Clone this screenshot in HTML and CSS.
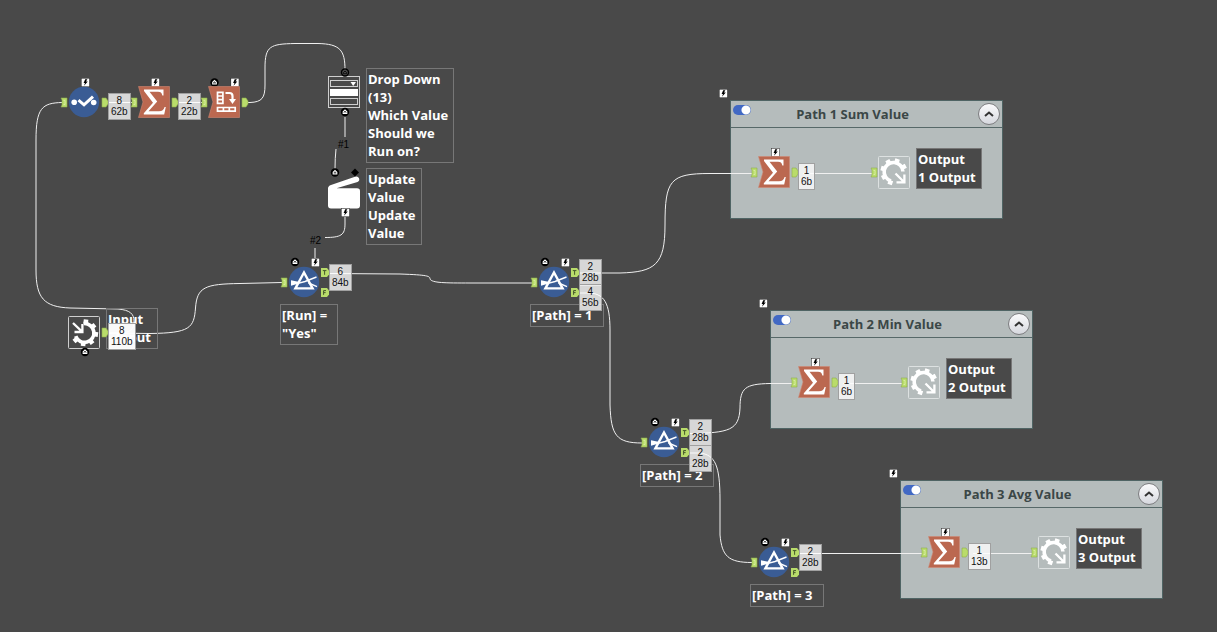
FILE: index.html
```html
<!DOCTYPE html>
<html lang="en">
<head>
<meta charset="utf-8">
<title>Workflow canvas</title>
<link rel="stylesheet" href="styles.css">
</head>
<body>
<svg class="defs" aria-hidden="true">
  <defs>
    <g id="port-in"><path d="M0 0H6V9H0L1 7V2Z" fill="#b9dc6b" stroke="#8fae4c" stroke-width=".6"/><path d="M2.5 2.5H4V6.5H2.5" fill="none" stroke="#dcf0a8" stroke-width=".8"/></g>
    <g id="port-out"><path d="M0 0H4L6 3V6L4 9H0Z" fill="#b9dc6b" stroke="#8fae4c" stroke-width=".6"/></g>
    <g id="port-t"><path d="M0 0H6L8 2.5V6.5L6 9H0Z" fill="#b9dc6b"/><path d="M1.8 2.6H5.4M3.6 2.6V6.8" stroke="#46582a" fill="none"/></g>
    <g id="port-f"><path d="M0 0H6L8 2.5V6.5L6 9H0Z" fill="#b9dc6b"/><path d="M5 2.6H2.6V6.8M2.6 4.6H4.6" stroke="#46582a" fill="none"/></g>
    <g id="bolt"><rect width="8.600" height="9" fill="#333"/><rect x=".6" y=".6" width="7.600" height="7.800" fill="#fff"/><path d="M4.200 1.300H6.400L5 3.600H6.800L3 7.700L4 5H2.600Z" fill="#000"/></g>
    <g id="action"><circle r="4.2" fill="#000"/><path d="M-1.8 1.5V-.2L0-1.9L1.8-.2V1.5Z" fill="none" stroke="#fff" stroke-width="1.1"/><path d="M-.9 .5H.9" stroke="#fff" stroke-width=".8"/></g>
    <g id="ribbon"><path d="M14.5 14.5H45.5V45.5H14.5L19 30Z" fill="#bb6850" stroke="#d08672" stroke-width=".6"/></g>

    <symbol id="tool-select" viewBox="0 0 60 60">
      <use href="#port-in" x="7" y="26"/><use href="#port-out" x="48" y="26"/><use href="#bolt" x="27" y="6"/>
      <circle cx="30" cy="30" r="15.2" fill="#3a5c94"/>
      <circle cx="20.2" cy="30.3" r="2.800" fill="#fff"/><circle cx="39.7" cy="30.5" r="2.800" fill="#fff"/>
      <path d="M24.5 28.200L30 32.800L39 24.600" fill="none" stroke="#fff" stroke-width="3"/>
    </symbol>
    <symbol id="tool-sum" viewBox="0 0 60 60">
      <use href="#port-in" x="7" y="26"/><use href="#port-out" x="48" y="26"/><use href="#bolt" x="27" y="6"/>
      <use href="#ribbon"/>
      <path d="M20 17.5H39.5V23.5H38.3C37.8 20.8 36.7 19.8 34 19.8H25.5L33.2 29.5L24.5 39.3H35C38.3 39.3 39.5 38 40.6 35H41.8L40.2 42.5H19.8V41.3L29 30.8L20 19Z" fill="#fff"/>
    </symbol>
    <symbol id="tool-transpose" viewBox="0 0 60 60">
      <use href="#port-in" x="7" y="26"/><use href="#port-out" x="48" y="26"/>
      <use href="#action" x="20.500" y="10.500"/><use href="#bolt" x="36.500" y="6"/>
      <use href="#ribbon"/>
      <path d="M23.500 20.300H28.900V31.300H23.500ZM23.500 24H28.900M23.500 27.600H28.900M23.500 35.500H41.200V39.200H23.500ZM29.400 35.500V39.200M35.300 35.500V39.200" fill="none" stroke="#fff" stroke-width="1.700"/>
      <path d="M31.5 21H35.500Q38.500 21 38.500 24V29" fill="none" stroke="#fff" stroke-width="2.200"/><path d="M35 27H42L38.500 32Z" fill="#fff"/>
    </symbol>
    <symbol id="tool-filter" viewBox="0 0 60 60">
      <use href="#port-in" x="7" y="26"/><use href="#port-t" x="47" y="16"/><use href="#port-f" x="47" y="36"/>
      <use href="#action" x="21" y="10"/><use href="#bolt" x="37" y="6"/>
      <circle cx="30" cy="30" r="15.2" fill="#3a5c94"/>
      <path d="M17 28.3L25.5 30V31.3L17 33.8Z" fill="#fff"/>
      <path d="M30 20.5L38.6 36.4H21.4Z" fill="#3a5c94" stroke="#fff" stroke-width="2.4"/>
      <path d="M24 31.4L31 29.5L42.500 25M34.5 31L43 34.6" fill="none" stroke="#fff" stroke-width="1.4"/>
    </symbol>
    <symbol id="tool-output" viewBox="0 0 60 60">
      <use href="#port-in" x="7" y="26"/>
      <g transform="translate(14 14)" fill="none" stroke="#fff">
        <rect x=".5" y=".5" width="31" height="32" rx="1" stroke="#dde1e1"/>
        <path d="M13 24.900A9.400 9.400 0 1 1 24.900 15.500" stroke-width="3.6"/>
        <path d="M23.5 12L27.8 9.8M18.3 7.5L19.6 3M11.5 8L9.3 4.2M7.4 13.2L3 12M7.8 20L4 22M13 24.5L11.6 28.5" stroke-width="4.6"/>
        <path d="M17.5 17.5L26 26M26.4 18.5V26.4H18.5" stroke-width="2.3"/>
      </g>
    </symbol>
    <symbol id="tool-input" viewBox="0 0 60 60">
      <use href="#port-out" x="48" y="26"/>
      <g transform="translate(14 14)" fill="none" stroke="#fff">
        <rect x=".5" y=".5" width="31" height="32" rx="1" stroke="#cfcfcf"/>
        <path d="M15.700 7.600A9.400 9.400 0 1 1 7.700 20.200" stroke-width="3.6"/>
        <path d="M17.6 8L18.1 3.6M23.5 11.5L27 8.8M25.5 18L30 18.6M21.9 24L24.6 27.7M15.6 25.5L15 30M9.5 22.5L6 25.5" stroke-width="4.6"/>
        <path d="M5 7L14 15.7M14.4 8V16H6.5" stroke-width="2.3"/>
      </g>
      <use href="#action" x="31" y="50"/>
    </symbol>
    <symbol id="tool-dropdown" viewBox="0 0 60 60">
      <g fill="none" stroke="#cfcfcf">
        <rect x="14.5" y="14.5" width="31" height="31"/>
        <rect x="16.5" y="18.5" width="27" height="6"/><rect x="16.5" y="36.5" width="27" height="6"/>
      </g>
      <rect x="16" y="27" width="28" height="7" fill="#fff"/><path d="M36.5 20H42L39.2 24Z" fill="#fff"/>
      <circle cx="31" cy="10.5" r="3.5" fill="none" stroke="#000" stroke-width="1.4"/><path d="M29.5 11.7V10.5L31 9L32.5 10.5V11.7Z" fill="none" stroke="#000" stroke-width=".8"/>
      <use href="#action" x="31" y="50"/>
    </symbol>
    <symbol id="tool-update" viewBox="0 0 60 60">
      <path d="M14 26.5Q14 24 17 23L41 14.8Q44 14 45 16.3Q46 18.7 43.5 20L22.5 26.2H43Q46 26.2 46 29V43.5Q46 46.5 43 46.5H17Q14 46.5 14 43.5Z" fill="#fff"/>
      <use href="#action" x="21" y="10.5"/><path d="M41 6.5L45 10.5L41 14.5L37 10.5Z" fill="#000"/><use href="#bolt" x="27" y="46"/>
    </symbol>
    <symbol id="mark-bolt" viewBox="0 0 9 9"><use href="#bolt"/></symbol>
  </defs>
</svg>

<main class="canvas">
  <section class="group group-1">
    <svg class="group-mark"><use href="#mark-bolt"/></svg>
    <header class="group-head">
      <input class="toggle" type="checkbox" checked aria-label="Enable Path 1 Sum Value">
      <h2 class="group-title">Path 1 Sum Value</h2>
      <button class="collapse" type="button" aria-label="Collapse Path 1"><svg viewBox="0 0 10 6"><path d="M1 5L5 1.5L9 5"/></svg></button>
    </header>
    <div class="group-body">
      <svg class="icon"><use href="#tool-sum"/></svg>
      <div class="badge"><span>1</span><span>6b</span></div>
      <svg class="icon icon-end"><use href="#tool-output"/></svg>
      <p class="note note-out">Output<br>1 Output</p>
    </div>
  </section>

  <section class="group group-2">
    <svg class="group-mark"><use href="#mark-bolt"/></svg>
    <header class="group-head">
      <input class="toggle" type="checkbox" checked aria-label="Enable Path 2 Min Value">
      <h2 class="group-title">Path 2 Min Value</h2>
      <button class="collapse" type="button" aria-label="Collapse Path 2"><svg viewBox="0 0 10 6"><path d="M1 5L5 1.5L9 5"/></svg></button>
    </header>
    <div class="group-body">
      <svg class="icon"><use href="#tool-sum"/></svg>
      <div class="badge"><span>1</span><span>6b</span></div>
      <svg class="icon icon-end"><use href="#tool-output"/></svg>
      <p class="note note-out">Output<br>2 Output</p>
    </div>
  </section>

  <section class="group group-3">
    <svg class="group-mark"><use href="#mark-bolt"/></svg>
    <header class="group-head">
      <input class="toggle" type="checkbox" checked aria-label="Enable Path 3 Avg Value">
      <h2 class="group-title">Path 3 Avg Value</h2>
      <button class="collapse" type="button" aria-label="Collapse Path 3"><svg viewBox="0 0 10 6"><path d="M1 5L5 1.5L9 5"/></svg></button>
    </header>
    <div class="group-body">
      <svg class="icon"><use href="#tool-sum"/></svg>
      <div class="badge"><span>1</span><span>13b</span></div>
      <svg class="icon icon-end"><use href="#tool-output"/></svg>
      <p class="note note-out">Output<br>3 Output</p>
    </div>
  </section>

  <svg class="wires" aria-hidden="true">
    <path d="M62 102.5C42 103 36 108 36 140V270C36 298 44 307 70 308L118 309C130 310 134 314 134 321C134 330 130 333 118 333H108"/>
    <path d="M108 333L150 333.500C190 333 194 328 195.500 308C197 287 205 284 240 283.500L282 282.500"/>
    <path d="M108 102.500H132M178 102.500H202"/>
    <path d="M246 102.500H250C262 102 265 98 265 85V68C265 46 270 44 295 43.500H318C340 44 345 50 345 70"/>
    <path d="M345 117V137M336 149Q335 158 335 169M345 217V224C345 235 341 237.500 325 237.500M315 248V258"/>
    <path d="M329 273.500L400 274C428 275 430 276 430 279C432 283 445 283 470 283H532"/>
    <path d="M579 273H620C655 272 665 265 665 225C665 180 670 173.500 710 173.500H752"/>
    <path d="M579 293H590C604 294 610 303 610 330V405C611 435 616 443 642 443"/>
    <path d="M689 433.500C730 433 739 430 740 408C740 388 745 384 770 383.500H793"/>
    <path d="M689 453H700C715 455 720 465 720 500V535C722 556 728 562.500 752 562.500"/>
    <path d="M799 553.500H922M803 173.500H872M843 383.500H902M973 553.500H1032"/>
  </svg>

  <p class="note note-input">Input<br>- Input</p>
  <p class="note note-dropdown">Drop Down<br>(13)<br>Which Value<br>Should we<br>Run on?</p>
  <p class="note note-update">Update<br>Value<br>Update<br>Value</p>
  <p class="note note-run">[Run] =<br>"Yes"</p>
  <p class="note note-path1">[Path] = 1</p>
  <p class="note note-path2">[Path] = 2</p>
  <p class="note note-path3">[Path] = 3</p>

  <svg class="icon tool at-select"><use href="#tool-select"/></svg>
  <svg class="icon tool at-summarize"><use href="#tool-sum"/></svg>
  <svg class="icon tool at-transpose"><use href="#tool-transpose"/></svg>
  <svg class="icon tool at-input"><use href="#tool-input"/></svg>
  <svg class="icon tool at-dropdown"><use href="#tool-dropdown"/></svg>
  <svg class="icon tool at-update"><use href="#tool-update"/></svg>
  <svg class="icon tool at-run"><use href="#tool-filter"/></svg>
  <svg class="icon tool at-path1"><use href="#tool-filter"/></svg>
  <svg class="icon tool at-path2"><use href="#tool-filter"/></svg>
  <svg class="icon tool at-path3"><use href="#tool-filter"/></svg>

  <span class="wire-tag tag-1">#1</span>
  <span class="wire-tag tag-2">#2</span>

  <div class="badge pinned badge-select"><span>8</span><span>62b</span></div>
  <div class="badge pinned badge-summarize"><span>2</span><span>22b</span></div>
  <div class="badge pinned solid badge-input"><span>8</span><span>110b</span></div>
  <div class="badge pinned badge-run"><span>6</span><span>84b</span></div>
  <div class="badge pinned badge-path1-t"><span>2</span><span>28b</span></div>
  <div class="badge pinned badge-path1-f"><span>4</span><span>56b</span></div>
  <div class="badge pinned badge-path2-t"><span>2</span><span>28b</span></div>
  <div class="badge pinned badge-path2-f"><span>2</span><span>28b</span></div>
  <div class="badge pinned badge-path3"><span>2</span><span>28b</span></div>
</main>
</body>
</html>
```
FILE: styles.css
```css
* { box-sizing: border-box; }

body {
  margin: 0;
  background: #494949;
  font-family: "Open Sans", "Noto Sans", sans-serif;
}

.defs { position: absolute; width: 0; height: 0; }

.canvas {
  position: relative;
  min-height: 100vh;
  overflow: hidden;
}

.wires {
  position: absolute;
  inset: 0;
  z-index: 1;
  width: 100%;
  height: 100%;
  fill: none;
  stroke: #f0f0f0;
  stroke-width: 1;
}

/* Tools */
.icon {
  position: relative;
  z-index: 3;
  flex: none;
  width: 60px;
  height: 60px;
}
.tool { position: absolute; }
.at-select { left: 54px; top: 72px; }
.at-summarize { left: 124px; top: 72px; }
.at-transpose { left: 194px; top: 72px; }
.at-input { left: 54px; top: 302px; }
.at-dropdown { left: 314px; top: 62px; }
.at-update { left: 314px; top: 162px; }
.at-run { left: 274px; top: 252px; }
.at-path1 { left: 524px; top: 252px; }
.at-path2 { left: 634px; top: 412px; }
.at-path3 { left: 744px; top: 532px; }

/* Annotations */
.note {
  position: absolute;
  z-index: 2;
  margin: 0;
  padding: 1px 1px 2px;
  border: 1px solid #777;
  color: #fff;
  font-size: 13px;
  font-weight: 700;
  line-height: 18px;
  white-space: nowrap;
}
.note-input { left: 106px; top: 308px; width: 52px; }
.note-dropdown { left: 366px; top: 68px; width: 88px; }
.note-update { left: 366px; top: 168px; width: 56px; }
.note-run { left: 280px; top: 304px; width: 58px; }
.note-path1 { left: 530px; top: 304px; width: 74px; }
.note-path2 { left: 640px; top: 464px; width: 74px; }
.note-path3 { left: 750px; top: 584px; width: 74px; }
.note-out {
  position: relative;
  width: 66px;
  margin-left: -8px;
  background: #494949;
}

/* Record counts */
.badge {
  position: relative;
  z-index: 4;
  display: flex;
  flex-direction: column;
  align-items: center;
  padding: 1px 2px 2px;
  border: 1px solid #a0a0a0;
  background: rgba(255, 255, 255, .78);
  color: #111;
  font-family: "Liberation Sans", Arial, sans-serif;
  font-size: 10px;
  line-height: 11px;
}
.pinned { position: absolute; }
.solid { background: rgba(255, 255, 255, .97); }
.badge-select { left: 108px; top: 93px; }
.badge-summarize { left: 178px; top: 93px; }
.badge-input { left: 108px; top: 323px; }
.badge-run { left: 329px; top: 264px; }
.badge-path1-t { left: 579px; top: 259px; }
.badge-path1-f { left: 579px; top: 284px; }
.badge-path2-t { left: 689px; top: 419px; }
.badge-path2-f { left: 689px; top: 445px; }
.badge-path3 { left: 799px; top: 544px; }

.wire-tag {
  position: absolute;
  z-index: 3;
  color: #000;
  font-family: "Liberation Sans", Arial, sans-serif;
  font-size: 10px;
  line-height: 12px;
}
.tag-1 { left: 338px; top: 139px; }
.tag-2 { left: 310px; top: 235px; }

/* Tool containers */
.group {
  position: absolute;
  width: 263px;
  border: 1px solid #4f6464;
  background: #b5bcbc;
}
.group-1 { left: 730px; top: 100px; width: 273px; }
.group-2 { left: 770px; top: 310px; }
.group-3 { left: 900px; top: 480px; }

.group-mark {
  position: absolute;
  left: -12px;
  top: -12px;
  width: 9px;
  height: 9px;
}

.group-head {
  display: flex;
  align-items: center;
  height: 27px;
  padding: 0 2px;
  border-bottom: 1px solid #566868;
}
.group-title {
  flex: 1;
  margin: 0;
  padding: 0 24px 1px 0;
  color: #3b4747;
  font-size: 13px;
  font-weight: 700;
  line-height: 18px;
  text-align: center;
}

.toggle {
  appearance: none;
  align-self: flex-start;
  flex: none;
  width: 18px;
  height: 10px;
  margin: 4px 0 0;
  border-radius: 5px;
  background: radial-gradient(circle at 13px 5px, #fff 4px, #4169c4 5px);
}

.collapse {
  display: flex;
  align-items: center;
  justify-content: center;
  flex: none;
  width: 22px;
  height: 22px;
  padding: 0;
  border: 1px solid #7d7d80;
  border-radius: 50%;
  background: linear-gradient(#fbfbfc, #d6d8de);
}
.collapse svg {
  width: 10px;
  height: 6px;
  fill: none;
  stroke: #333;
  stroke-width: 2;
}

.group-body {
  display: flex;
  align-items: center;
  padding: 14px 20px 16px 13px;
}
.group-body .badge { margin: 8px 0 0 -6px; }
.icon-end { margin-left: auto; }
.group-body .note { margin-top: -8px; }
```
